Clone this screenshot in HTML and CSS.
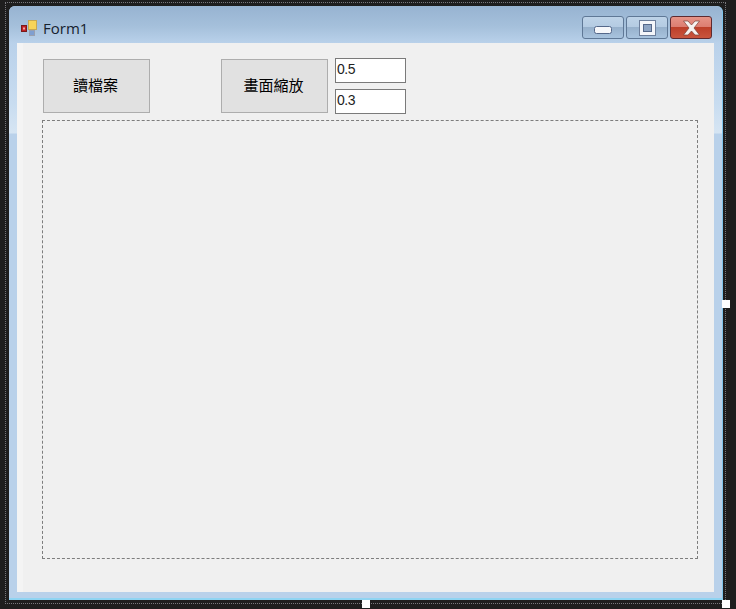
FILE: index.html
```html
<!DOCTYPE html>
<html lang="zh-Hant">
<head>
<meta charset="utf-8">
<title>Form1</title>
<link rel="stylesheet" href="styles.css">
</head>
<body>
<div class="designer">
  <div class="selection">
    <div class="window">
      <div class="titlebar">
        <svg class="app-icon" width="16" height="16" viewBox="0 0 16 16">
          <rect x="0.5" y="5.5" width="5" height="6" fill="#c01f22" stroke="#7a1a1a" stroke-width="1"/>
          <rect x="2" y="7.5" width="2" height="2" fill="#f0a8a0"/>
          <rect x="7.5" y="0.5" width="8" height="9" fill="#f8d458" stroke="#c8a850" stroke-width="1"/>
          <rect x="8.5" y="10.5" width="5" height="5" fill="#7f9fd0" stroke="#98a0b0" stroke-width="1"/>
        </svg>
        <span class="title">Form1</span>
        <div class="controls">
          <div class="ctl ctl-min">
            <svg width="18" height="8" viewBox="0 0 18 8"><rect x="0.5" y="0.5" width="17" height="7" rx="2" fill="#f6f7fa" stroke="#55688a"/></svg>
          </div>
          <div class="ctl ctl-max">
            <svg width="17" height="16" viewBox="0 0 17 16"><rect x="0.5" y="0.5" width="16" height="15" fill="#f4f6fa" stroke="#6d7f9c"/><rect x="4.5" y="4.5" width="8" height="7" fill="#8ea5c4" stroke="#55688a"/></svg>
          </div>
          <div class="ctl ctl-close">
            <svg width="19" height="18" viewBox="0 0 19 18"><path d="M1.5 2 L6 2 L9.5 6 L13 2 L17.5 2 L12 9 L17.5 16 L13 16 L9.5 12 L6 16 L1.5 16 L7 9 Z" fill="#f6f2f0" stroke="#7a4038" stroke-width="0.7"/></svg>
          </div>
        </div>
      </div>
      <div class="frame">
        <div class="client">
          <div class="toolbar">
            <button class="btn btn-open" type="button">讀檔案</button>
            <button class="btn" type="button">畫面縮放</button>
            <div class="inputs">
              <div class="field">0.5</div>
              <div class="field">0.3</div>
            </div>
          </div>
          <div class="panel"></div>
        </div>
      </div>
    </div>
  </div>
  <span class="handle handle-right"></span>
  <span class="handle handle-bottom"></span>
  <span class="handle handle-corner"></span>
</div>
</body>
</html>
```
FILE: styles.css
```css
* { box-sizing: border-box; }
html, body { margin: 0; padding: 0; }
body {
  width: 736px;
  height: 609px;
  background: #1e1e1e;
  overflow: hidden;
  font-family: "Noto Sans CJK TC", "Noto Sans", sans-serif;
}
.designer {
  position: relative;
  width: 736px;
  height: 609px;
  padding: 2px 10px 5px 5px;
}
.selection {
  width: 721px;
  height: 602px;
  border: 1px dotted #77777c;
  padding: 3px 2px 2px 3px;
}
.window {
  width: 714px;
  height: 594px;
  display: flex;
  flex-direction: column;
  border-radius: 6px 6px 0 0;
  background: #b9d1ea;
  border-right: 1px solid #7fc4ea;
  border-bottom: 2px solid #8fd4f2;
}
.titlebar {
  height: 37px;
  flex: none;
  display: flex;
  align-items: center;
  padding: 7px 10px 0 12px;
  border-radius: 6px 6px 0 0;
  background: linear-gradient(#97b3d1, #a5c0db 55%, #b9d1ea);
}
.app-icon { flex: none; margin-right: 6px; }
.title {
  font-family: "Open Sans", sans-serif;
  font-size: 15px;
  color: #16222f;
  flex: 1;
}
.controls { display: flex; gap: 2px; margin-top: -1px; }
.ctl {
  width: 42px;
  height: 23px;
  border: 1px solid #5f7896;
  border-radius: 3px;
  display: flex;
  align-items: center;
  justify-content: center;
  background: linear-gradient(#bed3e8 0, #b4cbe2 48%, #97b1cc 50%, #a8c3de 100%);
}
.ctl-min svg { margin-top: 4px; }
.ctl-close {
  border-color: #5e2a30;
  background: linear-gradient(#e69488 0, #dc7c70 48%, #bd3f2a 50%, #c9553e 100%);
}
.frame {
  flex: 1;
  display: flex;
  padding: 0 8px 0 8px;
  background: linear-gradient(to bottom, #b9d1ea 0, #c8dcf0 60px, #d6e5f3 90px, #b9d1ea 91px);
}
.client {
  width: 697px;
  height: 549px;
  background: #f0f0f0;
  padding: 15px 0 0 25px;
  box-shadow: inset 6px 0 0 #f4f4f4;
}
.toolbar {
  display: flex;
  align-items: flex-start;
  height: 62px;
}
.btn {
  width: 107px;
  height: 54px;
  margin-top: 1px;
  margin-left: 1px;
  padding: 0 2px 4px 0;
  border: 1px solid #adadad;
  background: #e1e1e1;
  color: #000;
  font-family: "Noto Sans CJK TC", sans-serif;
  font-size: 15px;
  line-height: 1;
}
.btn-open { margin-right: 70px; }
.inputs {
  display: flex;
  flex-direction: column;
  gap: 6px;
  margin-left: 7px;
}
.field {
  width: 71px;
  height: 25px;
  border: 1px solid #7a7a7a;
  background: #fff;
  color: #222;
  font-family: "Liberation Sans", sans-serif;
  font-size: 14px;
  letter-spacing: -0.5px;
  line-height: 20px;
  padding-left: 1px;
}
.panel {
  width: 656px;
  height: 439px;
  border: 1px dashed #7d7d7d;
}
.handle {
  position: absolute;
  width: 8px;
  height: 8px;
  background: #fff;
}
.handle-right { left: 722px; top: 300px; }
.handle-bottom { left: 362px; top: 600px; }
.handle-corner { left: 722px; top: 600px; }
```
